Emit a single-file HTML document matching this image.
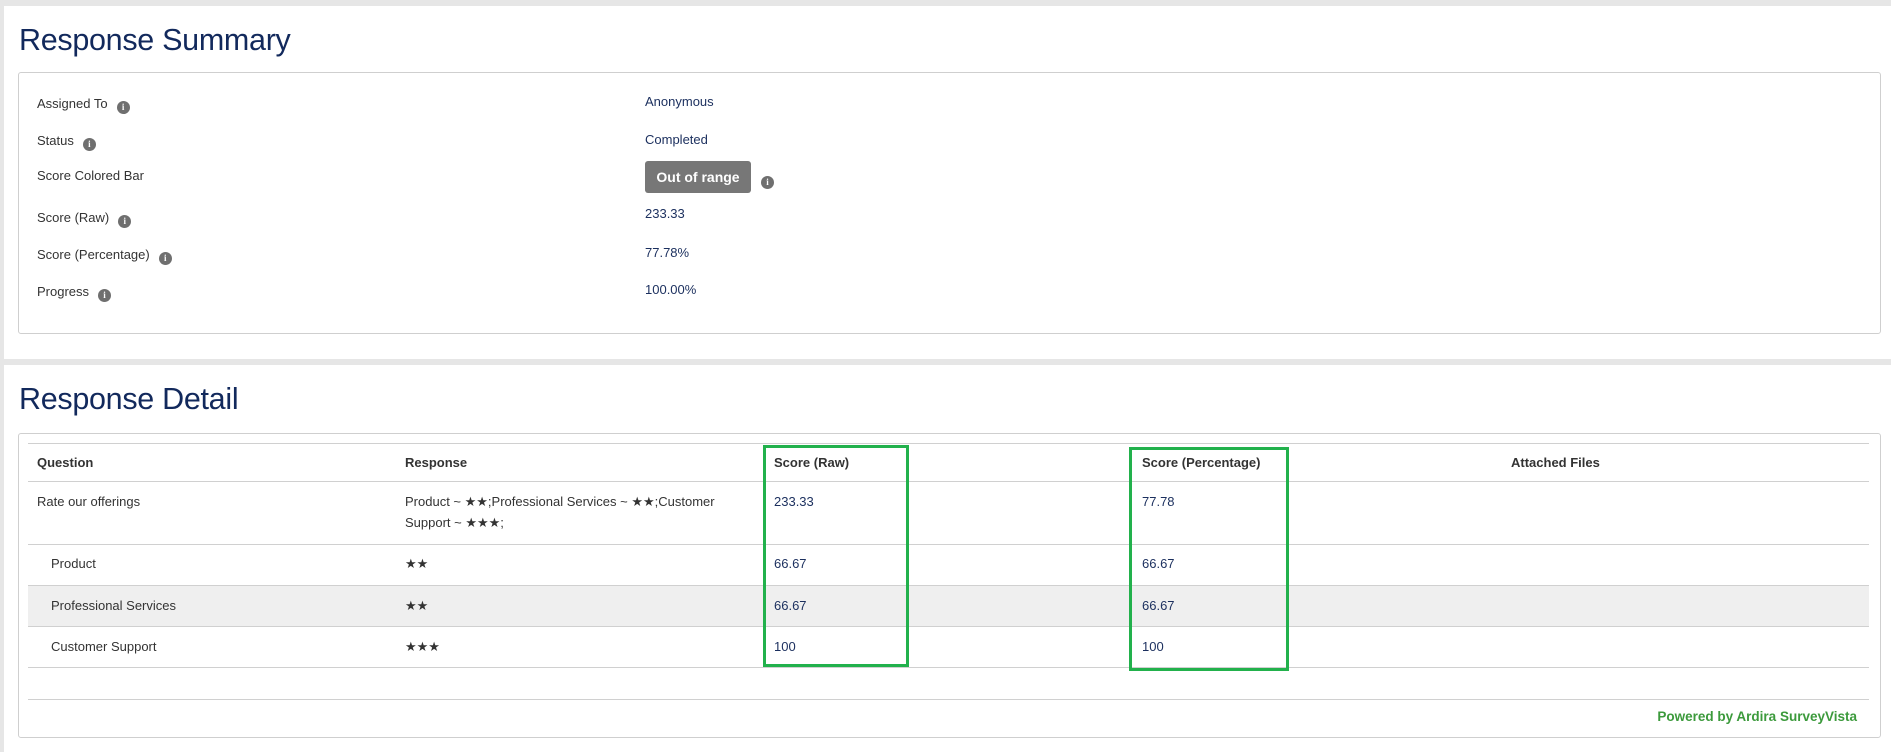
<!DOCTYPE html>
<html><head><meta charset="utf-8"><style>
*{box-sizing:border-box;margin:0;padding:0}
body{width:1891px;height:752px;background:#e6e6e6;font-family:"Liberation Sans",sans-serif;position:relative;overflow:hidden;color:#1b2f5e}
.abs{position:absolute}
.panel{position:absolute;left:4px;width:1887px;background:#fff}
h1{position:absolute;font-weight:normal;font-size:30.5px;color:#12295c;letter-spacing:-0.3px}
.box{position:absolute;border:1px solid #cfcfcf;border-radius:3px;background:#fff}
.t{position:absolute;font-size:13px;color:#333;white-space:nowrap;line-height:16px}
.v{position:absolute;font-size:13px;color:#1b2f5e;white-space:nowrap;line-height:16px}
.i{display:inline-block;width:13px;height:13px;border-radius:50%;background:#6f6f6f;color:#fff;font-size:9px;font-weight:bold;text-align:center;line-height:13px;vertical-align:-2px;margin-left:9px;font-family:"Liberation Serif",serif}
.hl{position:absolute;left:28px;width:1841px;height:1px;background:#d0d0d0}
.b{font-weight:bold;color:#333}
.g{position:absolute;border:3px solid #22b14c}
</style></head><body>
<div class="panel" style="top:6px;height:353px"></div>
<div class="panel" style="top:365px;height:387px"></div>

<h1 style="left:19px;top:23px">Response Summary</h1>
<div class="box" style="left:18px;top:72px;width:1863px;height:262px"></div>
<div class="t" style="left:37px;top:96px">Assigned To<span class="i">i</span></div>
<div class="t" style="left:37px;top:133px">Status<span class="i">i</span></div>
<div class="t" style="left:37px;top:168px">Score Colored Bar</div>
<div class="t" style="left:37px;top:210px">Score (Raw)<span class="i">i</span></div>
<div class="t" style="left:37px;top:247px">Score (Percentage)<span class="i">i</span></div>
<div class="t" style="left:37px;top:284px">Progress<span class="i">i</span></div>
<div class="v" style="left:645px;top:94px">Anonymous</div>
<div class="v" style="left:645px;top:132px">Completed</div>
<div class="abs" style="left:645px;top:161px;width:106px;height:32px;background:#777;border-radius:3px;color:#fff;font-weight:bold;font-size:14px;line-height:32px;text-align:center">Out of range</div>
<div class="abs" style="left:752px;top:170px"><span class="i">i</span></div>
<div class="v" style="left:645px;top:206px">233.33</div>
<div class="v" style="left:645px;top:245px">77.78%</div>
<div class="v" style="left:645px;top:282px">100.00%</div>

<h1 style="left:19px;top:382px">Response Detail</h1>
<div class="box" style="left:18px;top:433px;width:1863px;height:305px"></div>
<div class="hl" style="top:443px"></div>
<div class="hl" style="top:481px"></div>
<div class="hl" style="top:544px"></div>
<div class="abs" style="left:28px;top:585px;width:1841px;height:41px;background:#efefef"></div>
<div class="hl" style="top:585px"></div>
<div class="hl" style="top:626px"></div>
<div class="hl" style="top:667px"></div>
<div class="hl" style="top:699px"></div>

<div class="t b" style="left:37px;top:455px">Question</div>
<div class="t b" style="left:405px;top:455px">Response</div>
<div class="t b" style="left:774px;top:455px">Score (Raw)</div>
<div class="t b" style="left:1142px;top:455px">Score (Percentage)</div>
<div class="t b" style="left:1511px;top:455px">Attached Files</div>

<div class="t" style="left:37px;top:494px">Rate our offerings</div>
<div class="t" style="left:405px;top:491px;line-height:21px">Product ~ ★★;Professional Services ~ ★★;Customer<br>Support ~ ★★★;</div>
<div class="v" style="left:774px;top:494px">233.33</div>
<div class="v" style="left:1142px;top:494px">77.78</div>

<div class="t" style="left:51px;top:556px">Product</div>
<div class="t" style="left:405px;top:556px">★★</div>
<div class="v" style="left:774px;top:556px">66.67</div>
<div class="v" style="left:1142px;top:556px">66.67</div>

<div class="t" style="left:51px;top:598px">Professional Services</div>
<div class="t" style="left:405px;top:598px">★★</div>
<div class="v" style="left:774px;top:598px">66.67</div>
<div class="v" style="left:1142px;top:598px">66.67</div>

<div class="t" style="left:51px;top:639px">Customer Support</div>
<div class="t" style="left:405px;top:639px">★★★</div>
<div class="v" style="left:774px;top:639px">100</div>
<div class="v" style="left:1142px;top:639px">100</div>

<div class="g" style="left:763px;top:445px;width:146px;height:222px"></div>
<div class="g" style="left:1129px;top:447px;width:160px;height:224px"></div>

<div class="abs" style="right:34px;top:709px;font-size:13.5px;font-weight:bold;color:#3c9a3c;white-space:nowrap">Powered by Ardira SurveyVista</div>
</body></html>
